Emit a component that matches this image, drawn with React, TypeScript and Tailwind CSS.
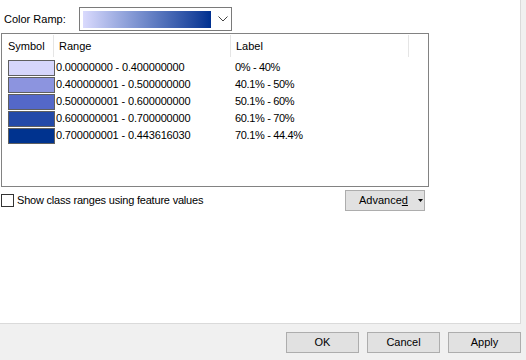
import React from "react";

const rows = [
  { color: "#d6d6fb", range: "0.00000000 - 0.400000000", label: "0% - 40%" },
  { color: "#8c94df", range: "0.400000001 - 0.500000000", label: "40.1% - 50%" },
  { color: "#5468c9", range: "0.500000001 - 0.600000000", label: "50.1% - 60%" },
  { color: "#2349a8", range: "0.600000001 - 0.700000000", label: "60.1% - 70%" },
  { color: "#00338f", range: "0.700000001 - 0.443616030", label: "70.1% - 44.4%" },
];

const WinButton: React.FC<{ children: React.ReactNode }> = ({ children }) => (
  <button className="w-[73px] h-[21px] bg-[#e1e1e1] border border-[#adadad] text-[11px] text-black flex items-center justify-center">
    {children}
  </button>
);

export default function App() {
  return (
    <div
      className="w-[526px] h-[360px] bg-[#f0f0f0] flex flex-col text-[11px] text-black overflow-hidden"
      style={{ fontFamily: '"Liberation Sans", Arial, sans-serif' }}
    >
      <div className="w-[521px] h-[324px] bg-white border-r border-b border-[#dadada] flex flex-col">
        {/* Color ramp */}
        <div className="mt-[7px] h-[24px] flex items-center">
          <span className="w-[79px] pl-[4px]">Color Ramp:</span>
          <div className="w-[153px] h-[24px] border border-[#7a7a7a] flex items-center pl-[3px]">
            <div className="w-[128px] h-[17px] bg-gradient-to-r from-[#dadafd] to-[#003090]" />
            <svg className="ml-[7px]" width="10" height="6" viewBox="0 0 10 6">
              <path d="M0.5 0.5 L5 5 L9.5 0.5" fill="none" stroke="#444" strokeWidth="1" />
            </svg>
          </div>
        </div>

        {/* Class list */}
        <div className="mt-[2px] ml-[1px] w-[428px] h-[154px] border border-[#828282] flex flex-col">
          <div className="h-[24px] flex items-center">
            <div className="w-[51px] pl-[6px]">Symbol</div>
            <div className="w-px h-[22px] bg-[#e5e5e5]" />
            <div className="w-[176px] pl-[5px]">Range</div>
            <div className="w-px h-[22px] bg-[#e5e5e5]" />
            <div className="w-[177px] pl-[5px]">Label</div>
            <div className="w-px h-[22px] bg-[#e5e5e5]" />
          </div>
          <div className="mt-[1px] flex flex-col">
            {rows.map((r) => (
              <div key={r.range} className="h-[17px] flex items-center">
                <div
                  className="ml-[6px] w-[47px] h-[16px] border border-[#5f5f5f]"
                  style={{ backgroundColor: r.color }}
                />
                <div className="w-[178px] pl-[1px] tracking-[-0.15px]">{r.range}</div>
                <div className="pl-[2px] tracking-[-0.35px]">{r.label}</div>
              </div>
            ))}
          </div>
        </div>

        {/* Options row */}
        <div className="mt-[3px] h-[21px] flex items-center">
          <div className="ml-[1px] w-[13px] h-[13px] border border-[#333] bg-white" />
          <span className="ml-[3px] tracking-[-0.2px]">Show class ranges using feature values</span>
          <button className="ml-auto mr-[95px] w-[80px] h-[21px] bg-[#e1e1e1] border border-[#adadad] flex items-center">
            <span className="ml-[13px]">
              Advance<span className="underline">d</span>
            </span>
            <svg className="ml-[10px]" width="5" height="3" viewBox="0 0 5 3">
              <path d="M0 0 H5 L2.5 3 Z" fill="#000" />
            </svg>
          </button>
        </div>
      </div>

      {/* Dialog buttons */}
      <div className="flex justify-end gap-[8px] pt-[8px] pr-[5px]">
        <WinButton>OK</WinButton>
        <WinButton>Cancel</WinButton>
        <WinButton>Apply</WinButton>
      </div>
    </div>
  );
}
